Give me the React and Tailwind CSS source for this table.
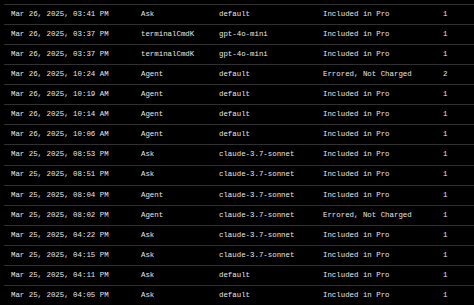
import React from 'react';

const rows = [
  ['Mar 26, 2025, 03:41 PM', 'Ask', 'default', 'Included in Pro', '1'],
  ['Mar 26, 2025, 03:37 PM', 'terminalCmdK', 'gpt-4o-mini', 'Included in Pro', '1'],
  ['Mar 26, 2025, 03:37 PM', 'terminalCmdK', 'gpt-4o-mini', 'Included in Pro', '1'],
  ['Mar 26, 2025, 10:24 AM', 'Agent', 'default', 'Errored, Not Charged', '2'],
  ['Mar 26, 2025, 10:19 AM', 'Agent', 'default', 'Included in Pro', '1'],
  ['Mar 26, 2025, 10:14 AM', 'Agent', 'default', 'Included in Pro', '1'],
  ['Mar 26, 2025, 10:06 AM', 'Agent', 'default', 'Included in Pro', '1'],
  ['Mar 25, 2025, 08:53 PM', 'Ask', 'claude-3.7-sonnet', 'Included in Pro', '1'],
  ['Mar 25, 2025, 08:51 PM', 'Ask', 'claude-3.7-sonnet', 'Included in Pro', '1'],
  ['Mar 25, 2025, 08:04 PM', 'Agent', 'claude-3.7-sonnet', 'Included in Pro', '1'],
  ['Mar 25, 2025, 08:02 PM', 'Agent', 'claude-3.7-sonnet', 'Errored, Not Charged', '1'],
  ['Mar 25, 2025, 04:22 PM', 'Ask', 'claude-3.7-sonnet', 'Included in Pro', '1'],
  ['Mar 25, 2025, 04:15 PM', 'Ask', 'claude-3.7-sonnet', 'Included in Pro', '1'],
  ['Mar 25, 2025, 04:11 PM', 'Ask', 'default', 'Included in Pro', '1'],
  ['Mar 25, 2025, 04:05 PM', 'Ask', 'default', 'Included in Pro', '1'],
];

export default function App() {
  return (
    <div
      className="w-[474px] h-[305px] overflow-hidden bg-black pt-[4px] pl-[4px] text-[7.4px] text-[#e6e6e6]"
      style={{ fontFamily: '"Liberation Mono", "DejaVu Sans Mono", monospace' }}
    >
      {rows.map((r, i) => (
        <div
          key={i}
          className="flex items-center h-[20.07px] border-t border-[#303030] pl-[7px] whitespace-nowrap"
        >
          <div className="w-[130px]">{r[0]}</div>
          <div className="w-[78px]">{r[1]}</div>
          <div className="w-[104px]">{r[2]}</div>
          <div className="w-[120px]">{r[3]}</div>
          <div>{r[4]}</div>
        </div>
      ))}
    </div>
  );
}
